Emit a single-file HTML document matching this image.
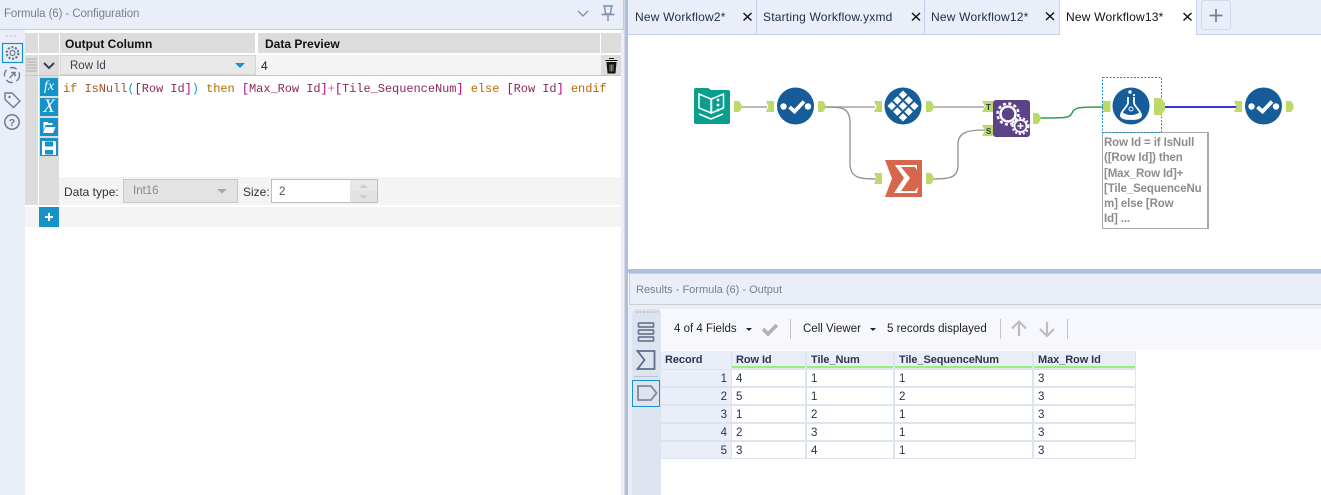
<!DOCTYPE html>
<html><head><meta charset="utf-8"><style>
html,body{margin:0;padding:0;width:1321px;height:495px;overflow:hidden;background:#fff;font-family:"Liberation Sans",sans-serif;font-size:12px;color:#1a2438}
div,span.a{position:absolute;box-sizing:border-box}
.t{white-space:nowrap}
svg{position:absolute;left:0;top:0}
.h{background:#dcdcdc}
.tab{top:10px;font-size:12px;color:#22304a;white-space:nowrap;letter-spacing:.2px}
.cell{height:16px;background:#fff;font-size:11.5px;line-height:18px;padding-left:4px;color:#2a3348}
.hd{top:351px;height:17px;background:#e9eef8;border-bottom:2px solid #98f07a;font-weight:bold;font-size:11px;line-height:18px;padding-left:4px;color:#2b3550;white-space:nowrap;letter-spacing:-.08px}
.blue{left:40px;width:18px;height:18px;background:#1592c8}
</style></head><body>

<!-- left panel -->
<div style="left:0;top:0;width:624px;height:30px;background:#e9eef8;border-bottom:1px solid #c6cad3;border-right:1px solid #c6cad3"></div>
<div class="t" style="left:4px;top:8px;color:#7b7f88;font-size:11.5px;letter-spacing:-.1px">Formula (6) - Configuration</div>
<div style="left:0;top:30px;width:25px;height:465px;background:#e9eef8"></div>
<div style="left:621px;top:30px;width:4px;height:465px;background:#e9eef8"></div>
<div style="left:624px;top:0;width:1px;height:495px;background:#d5d9e2"></div>
<div style="left:625px;top:0;width:3px;height:495px;background:#aebfe0"></div>

<div class="h" style="left:25px;top:33px;width:13px;height:20px"></div>
<div class="h" style="left:39px;top:33px;width:20px;height:20px"></div>
<div class="h" style="left:60px;top:33px;width:195px;height:20px"></div>
<div class="h" style="left:258px;top:33px;width:342px;height:20px"></div>
<div class="h" style="left:601px;top:33px;width:20px;height:20px"></div>
<div class="t" style="left:65px;top:37px;font-weight:bold;font-size:12px;color:#111">Output Column</div>
<div class="t" style="left:265px;top:37px;font-weight:bold;font-size:12px;color:#111">Data Preview</div>

<div style="left:25px;top:55px;width:596px;height:20px;background:#f4f4f4"></div>
<div class="h" style="left:25px;top:55px;width:13px;height:20px"></div>
<div class="h" style="left:39px;top:55px;width:20px;height:20px"></div>
<div style="left:60px;top:55px;width:196px;height:20px;background:#e8e8e8;border:1px solid #d5d5d5"></div>
<div class="t" style="left:70px;top:60px;font-size:11.5px;color:#3c4252">Row Id</div>
<div class="t" style="left:261px;top:59px;font-size:12px;color:#222">4</div>
<div class="h" style="left:601px;top:55px;width:20px;height:20px"></div>
<div style="left:25px;top:75px;width:596px;height:1px;background:#c8c8c8"></div>

<div class="h" style="left:25px;top:76px;width:13px;height:129px"></div>
<div style="left:38px;top:76px;width:1px;height:129px;background:#fff"></div>
<div class="h" style="left:39px;top:76px;width:20px;height:129px"></div>
<div style="left:59px;top:177px;width:562px;height:28px;background:#f4f4f4"></div>
<div style="left:25px;top:207px;width:596px;height:20px;background:#f4f4f4"></div>
<div style="left:39px;top:207px;width:20px;height:20px;background:#1592c8"></div>

<div class="t" style="left:63px;top:82px;font-family:'Liberation Mono',monospace;font-size:12px;letter-spacing:-.05px;line-height:15px"><span style="color:#b56a00">if</span> <span style="color:#a0522d">IsNull</span><span style="color:#1e8fd0">(</span><span style="color:#b0008a">[</span><span style="color:#8a2a5a">Row Id</span><span style="color:#b0008a">]</span><span style="color:#1e8fd0">)</span> <span style="color:#b56a00">then</span> <span style="color:#b0008a">[</span><span style="color:#8a2a5a">Max_Row Id</span><span style="color:#b0008a">]</span><span style="color:#f040f0">+</span><span style="color:#b0008a">[</span><span style="color:#8a2a5a">Tile_SequenceNum</span><span style="color:#b0008a">]</span> <span style="color:#b56a00">else</span> <span style="color:#b0008a">[</span><span style="color:#8a2a5a">Row Id</span><span style="color:#b0008a">]</span> <span style="color:#b56a00">endif</span></div>

<div class="blue" style="top:78px"></div><div class="blue" style="top:98px"></div><div class="blue" style="top:118px"></div><div class="blue" style="top:138px"></div>
<div class="t" style="left:40px;top:78px;width:18px;text-align:center;font-family:'Liberation Serif',serif;font-style:italic;font-size:14px;line-height:17px;color:#fff">fx</div>
<div class="t" style="left:40px;top:98px;width:18px;text-align:center;font-family:'Liberation Serif',serif;font-style:italic;font-size:19px;line-height:18px;color:#fff">X</div>

<div class="t" style="left:64px;top:185px;font-size:12px;color:#333">Data type:</div>
<div style="left:123px;top:179px;width:115px;height:24px;background:#e3e3e3;border:1px solid #c8c8c8"></div>
<div class="t" style="left:133px;top:185px;font-size:11.5px;color:#8a8a8a">Int16</div>
<div class="t" style="left:243px;top:185px;font-size:12px;color:#333">Size:</div>
<div style="left:271px;top:179px;width:107px;height:24px;background:#fff;border:1px solid #bdbdbd"></div>
<div class="t" style="left:279px;top:186px;font-size:11.5px;color:#555">2</div>
<div style="left:350px;top:180px;width:27px;height:11px;background:#e8e8e8"></div>
<div style="left:350px;top:191px;width:27px;height:11px;background:#e2e2e2"></div>

<!-- tabs -->
<div style="left:628px;top:0;width:693px;height:35px;background:#e9eef8;border-bottom:1px solid #c5d0e6"></div>
<div style="left:756px;top:0;width:1px;height:35px;background:#c5d0e6"></div>
<div style="left:924px;top:0;width:1px;height:35px;background:#c5d0e6"></div>
<div style="left:1059px;top:0;width:138px;height:35px;background:#fff;border-left:1px solid #c5d0e6;border-right:1px solid #c5d0e6"></div>
<div class="tab" style="left:635px">New Workflow2*</div>
<div class="tab" style="left:763px">Starting Workflow.yxmd</div>
<div class="tab" style="left:931px">New Workflow12*</div>
<div class="tab" style="left:1066px;color:#111">New Workflow13*</div>
<div style="left:1201px;top:0;width:30px;height:30px;background:#e9eef8;border:1px solid #d2d9e8;border-radius:3px"></div>

<!-- lower panel -->
<div style="left:628px;top:269px;width:693px;height:4px;background:#aebfe0"></div>
<div style="left:629px;top:273px;width:692px;height:32px;background:#e9eef8;border:1px solid #cfcfcf;border-right:0"></div>
<div class="t" style="left:636px;top:284px;font-size:11px;color:#7b7f88">Results - Formula (6) - Output</div>
<div style="left:629px;top:305px;width:692px;height:4px;background:#e9eef8"></div>
<div style="left:628px;top:305px;width:4px;height:190px;background:#e9eef8"></div>
<div style="left:632px;top:309px;width:29px;height:186px;background:#dde3ef;border-radius:3px 3px 0 0"></div>
<div style="left:661px;top:309px;width:660px;height:41px;background:#f6f8fd"></div>
<div style="left:632px;top:380px;width:28px;height:27px;border:1px solid #1592c8"></div>
<div style="left:634px;top:376px;width:24px;height:1px;background:#bcc3d0"></div>

<div class="t" style="left:674px;top:323px;font-size:11.5px;color:#222">4 of 4 Fields</div>
<div class="t" style="left:803px;top:323px;font-size:11.5px;color:#222">Cell Viewer</div>
<div class="t" style="left:887px;top:323px;font-size:11.5px;color:#222">5 records displayed</div>

<!-- table -->
<div style="left:661px;top:351px;width:475px;height:108px;background:#dde3ef"></div>
<div class="hd" style="left:661px;width:70px;border-bottom:0;height:18px">Record</div>
<div class="hd" style="left:732px;width:73px">Row Id</div>
<div class="hd" style="left:807px;width:86px">Tile_Num</div>
<div class="hd" style="left:895px;width:137px">Tile_SequenceNum</div>
<div class="hd" style="left:1034px;width:101px">Max_Row Id</div>

<div class="cell" style="left:661px;top:370px;width:70px;background:#e9eef8;text-align:right;padding:0 4px 0 0">1</div>
<div class="cell" style="left:661px;top:388px;width:70px;background:#e9eef8;text-align:right;padding:0 4px 0 0">2</div>
<div class="cell" style="left:661px;top:406px;width:70px;background:#e9eef8;text-align:right;padding:0 4px 0 0">3</div>
<div class="cell" style="left:661px;top:424px;width:70px;background:#e9eef8;text-align:right;padding:0 4px 0 0">4</div>
<div class="cell" style="left:661px;top:442px;width:70px;background:#e9eef8;text-align:right;padding:0 4px 0 0">5</div>

<div class="cell" style="left:732px;top:370px;width:73px">4</div><div class="cell" style="left:807px;top:370px;width:86px">1</div><div class="cell" style="left:895px;top:370px;width:137px">1</div><div class="cell" style="left:1034px;top:370px;width:101px">3</div>
<div class="cell" style="left:732px;top:388px;width:73px">5</div><div class="cell" style="left:807px;top:388px;width:86px">1</div><div class="cell" style="left:895px;top:388px;width:137px">2</div><div class="cell" style="left:1034px;top:388px;width:101px">3</div>
<div class="cell" style="left:732px;top:406px;width:73px">1</div><div class="cell" style="left:807px;top:406px;width:86px">2</div><div class="cell" style="left:895px;top:406px;width:137px">1</div><div class="cell" style="left:1034px;top:406px;width:101px">3</div>
<div class="cell" style="left:732px;top:424px;width:73px">2</div><div class="cell" style="left:807px;top:424px;width:86px">3</div><div class="cell" style="left:895px;top:424px;width:137px">1</div><div class="cell" style="left:1034px;top:424px;width:101px">3</div>
<div class="cell" style="left:732px;top:442px;width:73px">3</div><div class="cell" style="left:807px;top:442px;width:86px">4</div><div class="cell" style="left:895px;top:442px;width:137px">1</div><div class="cell" style="left:1034px;top:442px;width:101px">3</div>

<!-- annotation -->
<div style="left:1102px;top:132px;width:107px;height:97px;background:#fff;border:1px solid #a8a8a8;border-right-width:2px;border-bottom-width:1px"></div>
<div class="t" style="left:1104px;top:136px;font-size:11.5px;line-height:15.3px;font-weight:bold;color:#8c8c8c;letter-spacing:-.12px">Row Id = if IsNull<br>([Row Id]) then<br>[Max_Row Id]+<br>[Tile_SequenceNu<br>m] else [Row<br>Id] ...</div>

<svg width="1321" height="495" viewBox="0 0 1321 495">
<defs>
<g id="out"><path d="M0 0h5l2.500 3.500v4l-2.500 3.500h-5z" fill="#bcd96a"/></g>
<g id="in"><path d="M0 0h8v11h-8l2.500-5.500z" fill="#bcd96a"/></g>
<g id="chk"><circle r="18.500" fill="#155c98"/><circle cx="-12" cy="0.500" r="3.200" fill="#fff"/><circle cx="12.500" cy="0.500" r="3.200" fill="#fff"/><path d="M-6 1l5 4.500 9.500-10" fill="none" stroke="#fff" stroke-width="3.800"/></g>
</defs>

<!-- header icons -->
<path d="M578 11l5 5 5-5" fill="none" stroke="#7d8da8" stroke-width="1.300"/>
<path d="M603 6h10M604.500 6l1 8h5l1-8M601.500 14.500h13M608 15v6" fill="none" stroke="#7d8da8" stroke-width="1.400"/>
<path d="M1216 9v13M1209.500 15.500h13" stroke="#6e7f9c" stroke-width="1.700" fill="none"/>
<path d="M743.500 13l8 7.500M751.500 13l-8 7.500M912 13l8 7.500M920 13l-8 7.500M1046 12.500l8 7.500M1054 12.500l-8 7.500M1183.500 13l8 7.500M1191.500 13l-8 7.500" stroke="#111" stroke-width="1.400" fill="none"/>

<!-- sidebar -->
<path d="M6 36h2M10 36h2M14 36h2" stroke="#b8bdc8" stroke-width="1"/>
<rect x="2.500" y="43.500" width="20" height="19" fill="none" stroke="#1592c8" stroke-width="1.200"/>
<circle cx="12.500" cy="53" r="2.500" fill="none" stroke="#6f7b90" stroke-width="1.200"/>
<circle cx="12.500" cy="53" r="5.800" fill="none" stroke="#6f7b90" stroke-width="2.200" stroke-dasharray="2.200 1.500"/>
<circle cx="12" cy="75" r="7.500" fill="none" stroke="#6f7b90" stroke-width="1.400" stroke-dasharray="7 4"/>
<path d="M9.500 78l5-5M11 72.500h4v4" fill="none" stroke="#6f7b90" stroke-width="1.400"/>
<path d="M5 93h7l8 8-6.500 6.500-8.500-8z" fill="none" stroke="#6f7b90" stroke-width="1.400"/><circle cx="9.500" cy="97" r="1.200" fill="#6f7b90"/>
<circle cx="12" cy="122" r="7.200" fill="none" stroke="#6f7b90" stroke-width="1.500"/>
<text x="12" y="126" font-family="Liberation Sans" font-size="10.500" font-weight="bold" fill="#6f7b90" text-anchor="middle">?</text>

<!-- row controls -->
<path d="M26 59h11M26 62h11M26 65h11M26 68h11M26 71h11" stroke="#bdbdbd" stroke-width="1.500"/>
<path d="M44 63l5 5 5-5" fill="none" stroke="#33424a" stroke-width="2"/>
<path d="M235 63h10l-5 5z" fill="#1592c8"/>
<path d="M217 189h10l-5 4.500z" fill="#a8a8a8"/>
<path d="M359 188l4.500-4 4.500 4zM359 195l4.500 4 4.500-4z" fill="#cfcfcf"/>
<path d="M605.500 60.500h12M609 58.500h5M607 62.500l1 10.500h7l1-10.500z" fill="#111" stroke="#111" stroke-width="1"/>
<path d="M610 64.500v7M611.500 64.500v7M613 64.500v7" stroke="#ddd" stroke-width=".6"/>
<path d="M44.500 126v-1h4l1 1h4v2h-7l-2 6zM44 136l2.500-6h10l-2.500 6z" fill="#fff" transform="translate(-1 -3)"/>
<path d="M42 141h13l1 1v13h-14zM45 141.500v5h8v-5zM45 150v4.500h8v-4.500z" fill="#fff" fill-rule="evenodd"/>
<path d="M49 213v8M45 217h8" stroke="#fff" stroke-width="2"/>

<!-- canvas connectors -->
<path d="M741 107h26M825 107h50M933 107h51" stroke="#a3a3a3" stroke-width="1.500" fill="none"/>
<path d="M825 107c18 0 24 1 25 14v44c1 12 8 14 26 14" stroke="#8f8f8f" stroke-width="1.300" fill="none"/>
<path d="M933 179c18 0 24-2 25-12v-24c1-10 8-13 27-13" stroke="#8f8f8f" stroke-width="1.300" fill="none"/>
<path d="M1040 118c26 0 30 0 32-5 2-6 8-6 32-6" stroke="#2f9d4d" stroke-width="1.600" fill="none"/>
<path d="M1165 107h74" stroke="#3a35e0" stroke-width="2" fill="none"/>

<!-- book -->
<path d="M696 88h12l3 2h17a2 2 0 0 1 2 2v30a2 2 0 0 1-2 2h-32a2 2 0 0 1-2-2v-32a2 2 0 0 1 2-2z" fill="#0a9e8c"/>
<path d="M699 94l12 5v14l-12-5zM711.500 99l12-5v14l-12 5z" fill="none" stroke="#fff" stroke-width="1.500"/>
<circle cx="718" cy="100" r="1.400" fill="#fff"/><circle cx="718" cy="105" r="1.400" fill="#fff"/><circle cx="718" cy="110" r="1.400" fill="#fff"/>
<path d="M699 114l12 5 12-5" fill="none" stroke="#fff" stroke-width="1.500"/>
<use href="#out" x="734" y="101"/><use href="#in" x="766" y="101"/>
<use href="#chk" x="795.500" y="106"/>
<use href="#out" x="818" y="101"/>

<!-- grid tool -->
<use href="#in" x="874" y="101"/>
<circle cx="903" cy="106" r="18.500" fill="#155c98"/>
<g fill="#fff" transform="rotate(45 903 106)">
<rect x="892" y="95" width="6" height="6"/><rect x="900" y="95" width="6" height="6"/><rect x="908" y="95" width="6" height="6"/>
<rect x="892" y="103" width="6" height="6"/><rect x="900" y="103" width="6" height="6"/><rect x="908" y="103" width="6" height="6"/>
<rect x="892" y="111" width="6" height="6"/><rect x="900" y="111" width="6" height="6"/><rect x="908" y="111" width="6" height="6"/>
</g>
<use href="#out" x="926" y="101"/>

<!-- sigma -->
<use href="#in" x="874" y="173"/>
<path d="M885 160h37v37h-37l7-18.500z" fill="#d6674d"/>
<path d="M895 165h22v5l-2-3h-14l9 11-9 13h14l3-4-1 6h-23l10-15z" fill="#fff"/>
<use href="#out" x="926" y="173"/>

<!-- gear -->
<path d="M982 101h11v11h-11l3-5.500zM982 125h11v11h-11l3-5.500z" fill="#bcd96a"/>
<text x="986" y="110" font-family="Liberation Sans" font-size="8" font-weight="bold" fill="#26404a">T</text>
<text x="986" y="134" font-family="Liberation Sans" font-size="8" font-weight="bold" fill="#26404a">S</text>
<rect x="993" y="100" width="37" height="37" rx="3" fill="#5d4288"/>
<circle cx="1008" cy="114" r="7.500" fill="none" stroke="#fff" stroke-width="2.500"/>
<circle cx="1008" cy="114" r="10.500" fill="none" stroke="#fff" stroke-width="2.500" stroke-dasharray="3 2.500"/>
<circle cx="1020.500" cy="126" r="6" fill="none" stroke="#fff" stroke-width="1.800"/>
<circle cx="1020.500" cy="126" r="8" fill="none" stroke="#fff" stroke-width="2" stroke-dasharray="2.200 1.800"/>
<path d="M1017.500 126h6M1020.500 123v6" stroke="#fff" stroke-width="1.500"/>
<use href="#out" x="1033" y="113"/>

<!-- formula -->
<rect x="1102.500" y="77.500" width="59" height="55" fill="none" stroke="#1592c8" stroke-width="1" stroke-dasharray="2 1.500"/>
<path d="M1103 101h7.500v11h-7.500z" fill="#bcd96a"/>
<circle cx="1131" cy="106" r="18.500" fill="#155c98"/>
<path d="M1128 97v6c0 3-7 8-7 12 0 3 3 4 10 4s10-1 10-4c0-4-7-9-7-12v-6" fill="none" stroke="#fff" stroke-width="1.800"/>
<path d="M1122 112c5 4 13 4 18 0l2 3c0 3-3 4.500-11 4.500s-11-1.500-11-4.500z" fill="#fff"/>
<circle cx="1131" cy="109" r="2" fill="none" stroke="#fff" stroke-width="1"/>
<circle cx="1130" cy="92" r="1.700" fill="#fff"/><circle cx="1134" cy="95" r="1.100" fill="#fff"/>
<path d="M1154 98h7l4 5v7l-4 5h-7z" fill="#bcd96a"/>

<!-- browse -->
<use href="#in" x="1234" y="101"/>
<use href="#chk" x="1263.500" y="106"/>
<use href="#out" x="1286" y="101"/>

<!-- results rail -->
<path d="M636 312h22" stroke="#b4bac6" stroke-width="1.500" stroke-dasharray="2 1.500"/>
<g fill="none" stroke="#6d7a93" stroke-width="1.700"><rect x="638.500" y="323" width="15" height="4" rx=".5"/><rect x="638.500" y="330" width="15" height="4" rx=".5"/><rect x="638.500" y="337" width="15" height="4" rx=".5"/></g>
<path d="M637.500 351h17v18h-17l7-9z" fill="none" stroke="#5f6d88" stroke-width="1.800"/>
<path d="M638 386h13l5.500 7-5.500 7h-13z" fill="none" stroke="#7d889e" stroke-width="1.800"/>

<!-- toolbar -->
<path d="M746 328h6l-3 3z" fill="#222"/><path d="M870 328h6l-3 3z" fill="#222"/>
<path d="M763 329l5 5 9-9" fill="none" stroke="#b0b0b0" stroke-width="3.500"/>
<path d="M790.500 319v20M1000.500 319v20M1067.500 319v20" stroke="#c4c4c4" stroke-width="1"/>
<path d="M1019 336v-14M1012 328.500l7-7 7 7M1047 322v14M1040 329l7 7 7-7" fill="none" stroke="#bdbdbd" stroke-width="2.200"/>
</svg>
</body></html>
